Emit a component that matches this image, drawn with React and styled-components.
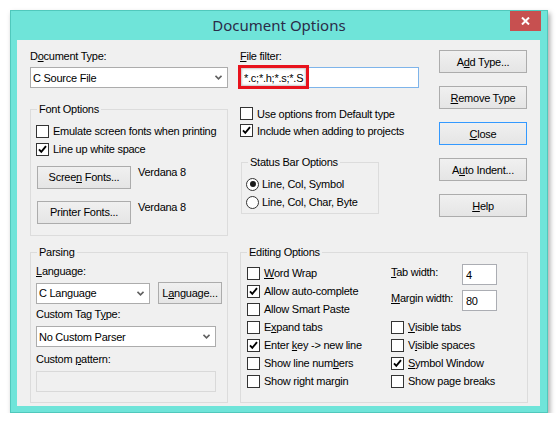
import React from "react";
import styled, { createGlobalStyle } from "styled-components";

const Global = createGlobalStyle`
  html, body { margin: 0; padding: 0; background: #fff; }
  body {
    font-family: "Liberation Sans", Arial, sans-serif;
    font-size: 11px;
    letter-spacing: -0.25px;
    color: #000;
  }
`;

const Window = styled.div`
  margin: 10px 0 0 10px;
  width: 538px;
  height: 403px;
  box-sizing: border-box;
  background: #6fe4d9;
  border: 1px solid #50c8bc;
  box-shadow: 2px 3px 5px rgba(0, 0, 0, 0.35);
  display: flex;
  flex-direction: column;
`;

const TitleBar = styled.div`
  height: 29px;
  flex: none;
  display: grid;
  grid-template-columns: 1fr auto 1fr;
  align-items: start;
`;

const Title = styled.div`
  grid-column: 2;
  font-family: "Noto Sans", "Open Sans", sans-serif;
  font-size: 15px;
  letter-spacing: 0;
  line-height: 29px;
  color: #2b2c48;
`;

const CloseX = styled.div`
  grid-column: 3;
  justify-self: end;
  margin-right: 6px;
  width: 31px;
  height: 20px;
  background: #c75050;
  display: flex;
  align-items: center;
  justify-content: center;
`;

const Client = styled.div`
  flex: 1;
  margin: 0 7px 6px 6px;
  background: #f0f0f0;
  padding: 10px 13px 0 13px;
  box-sizing: border-box;
  display: flex;
  flex-direction: column;
`;

const TopRow = styled.div`
  display: grid;
  grid-template-columns: 198px 179px 88px;
  column-gap: 12px;
  align-items: start;
  & > :nth-child(3) { margin-left: 8px; }
`;

const BottomRow = styled.div`
  display: grid;
  grid-template-columns: 198px 288px;
  column-gap: 12px;
  margin-top: 10px;
  align-items: start;
`;

const Col = styled.div`
  display: flex;
  flex-direction: column;
  align-items: flex-start;
`;

const Label = styled.div`
  line-height: 13px;
  height: 13px;
  white-space: nowrap;
  margin-top: ${(p) => p.$mt || 0}px;
`;

const Acc = styled.span`
  text-decoration: underline;
  text-underline-offset: 1px;
`;

const Combo = styled.div`
  box-sizing: border-box;
  width: ${(p) => p.$w}px;
  height: 21px;
  margin-top: ${(p) => p.$mt || 0}px;
  border: 1px solid #acacac;
  background: #fff;
  padding: 0 5px 0 2px;
  display: flex;
  align-items: center;
  justify-content: space-between;
  white-space: nowrap;
`;

const TextBox = styled.input`
  box-sizing: border-box;
  width: ${(p) => p.$w}px;
  height: 21px;
  margin: ${(p) => p.$mt || 0}px 0 0 0;
  border: 1px solid ${(p) => (p.$focus ? "#7eb4ea" : p.disabled ? "#d9d9d9" : "#abadb3")};
  background: ${(p) => (p.disabled ? "#f0f0f0" : "#fff")};
  padding: 0 3px;
  font: inherit;
  letter-spacing: inherit;
  color: #000;
  outline: none;
`;

const FilterWrap = styled.div`
  position: relative;
  margin-top: 4px;
`;

const Highlight = styled.div`
  position: absolute;
  left: -2px;
  top: -2px;
  width: 71px;
  height: 24px;
  box-sizing: border-box;
  border: 3px solid #e8121c;
  box-shadow: inset 0 0 2px 1px rgba(0, 0, 0, 0.22);
  pointer-events: none;
`;

const Group = styled.fieldset`
  margin: ${(p) => p.$m || "0"};
  padding: 0;
  border: 1px solid #dcdcdc;
  min-width: 0;
  box-sizing: border-box;
  width: ${(p) => p.$w}px;
`;

const Legend = styled.legend`
  margin-left: 6px;
  padding: 0 2px;
  line-height: 13px;
  height: 13px;
`;

const GroupBody = styled.div`
  padding: ${(p) => p.$pad};
  display: flex;
  flex-direction: column;
  align-items: flex-start;
`;

const Item = styled.div`
  display: flex;
  align-items: center;
  gap: ${(p) => (p.$radio ? 3 : 4)}px;
  height: ${(p) => p.$h || 18}px;
  white-space: nowrap;
  margin-top: ${(p) => p.$mt || 0}px;
`;

const Box = styled.span`
  box-sizing: border-box;
  width: 13px;
  height: 13px;
  flex: none;
  border: 1px solid #333;
  background: #fff;
  display: flex;
  align-items: center;
  justify-content: center;
`;

const Circle = styled(Box)`
  border-radius: 50%;
`;

const Dot = styled.span`
  width: 6px;
  height: 6px;
  border-radius: 50%;
  background: #1a1a1a;
`;

const Button = styled.button`
  box-sizing: border-box;
  width: ${(p) => p.$w}px;
  height: ${(p) => p.$h || 23}px;
  margin: 0;
  padding: 0;
  border: 1px solid ${(p) => (p.$default ? "#3399ff" : "#acacac")};
  background: linear-gradient(#f0f0f0, #e5e5e5);
  font: inherit;
  letter-spacing: inherit;
  color: #000;
  white-space: nowrap;
`;

const ButtonStack = styled.div`
  display: flex;
  flex-direction: column;
  gap: 13px;
`;

const FontRow = styled.div`
  display: flex;
  align-items: flex-start;
  gap: 7px;
  margin: ${(p) => p.$mt}px 0 0 1px;
  line-height: 13px;
`;

const LangRow = styled.div`
  display: flex;
  align-items: center;
  gap: 8px;
  margin-top: 4px;
`;

const EditGrid = styled.div`
  display: grid;
  grid-template-columns: 144px auto;
  padding: 5px 6px 12px 6px;
`;

const FieldRow = styled.div`
  display: flex;
  align-items: flex-start;
  margin-top: ${(p) => p.$mt || 0}px;
`;

const FieldLabel = styled.div`
  width: 71px;
  padding-top: 2px;
  line-height: 13px;
  white-space: nowrap;
`;

const Chevron = () => (
  <svg width="7" height="5" viewBox="0 0 7 5">
    <polyline points="0.5,0.8 3.5,3.8 6.5,0.8" fill="none" stroke="#606060" strokeWidth="1.6" />
  </svg>
);

const CheckMark = () => (
  <svg width="9" height="9" viewBox="0 0 9 9">
    <path d="M1 4.3 L3.3 6.8 L8 1.2" fill="none" stroke="#000" strokeWidth="1.9" />
  </svg>
);

const Check = ({ checked, children, h, mt }) => (
  <Item $h={h} $mt={mt}>
    <Box>{checked && <CheckMark />}</Box>
    <span>{children}</span>
  </Item>
);

const Radio = ({ checked, children }) => (
  <Item $radio>
    <Circle>{checked && <Dot />}</Circle>
    <span>{children}</span>
  </Item>
);

export default function App() {
  return (
    <>
      <Global />
      <Window>
        <TitleBar>
          <Title>Document Options</Title>
          <CloseX>
            <svg width="9" height="8" viewBox="0 0 9 8">
              <path d="M1 0.5 L8 7.5 M8 0.5 L1 7.5" stroke="#fff" strokeWidth="2" />
            </svg>
          </CloseX>
        </TitleBar>
        <Client>
          <TopRow>
            <Col>
              <Label>
                D<Acc>o</Acc>cument Type:
              </Label>
              <Combo $w={198} $mt={4}>
                <span>C Source File</span>
                <Chevron />
              </Combo>
              <Group $w={198} $m="15px 0 0 0">
                <Legend>Font Options</Legend>
                <GroupBody $pad="6px 5px 11px 5px">
                  <Check>Emulate screen fonts when printing</Check>
                  <Check checked>Line up white space</Check>
                  <FontRow $mt={8}>
                    <Button $w={94}>
                      Scree<Acc>n</Acc> Fonts...
                    </Button>
                    <span>Verdana 8</span>
                  </FontRow>
                  <FontRow $mt={12}>
                    <Button $w={94}>Printer Fonts...</Button>
                    <span>Verdana 8</span>
                  </FontRow>
                </GroupBody>
              </Group>
            </Col>
            <Col>
              <Label>
                <Acc>F</Acc>ile filter:
              </Label>
              <FilterWrap>
                <TextBox $w={179} $focus readOnly value="*.c;*.h;*.s;*.S" />
                <Highlight />
              </FilterWrap>
              <Check h={17} mt={17}>Use options from Default type</Check>
              <Check h={17} checked>Include when adding to projects</Check>
              <Group $w={138} $m="17px 0 0 1px">
                <Legend>Status Bar Options</Legend>
                <GroupBody $pad="6px 4px 2px 4px">
                  <Radio checked>Line, Col, Symbol</Radio>
                  <Radio>Line, Col, Char, Byte</Radio>
                </GroupBody>
              </Group>
            </Col>
            <ButtonStack>
              <Button $w={88}>
                A<Acc>d</Acc>d Type...
              </Button>
              <Button $w={88}>
                <Acc>R</Acc>emove Type
              </Button>
              <Button $w={88} $default>
                <Acc>C</Acc>lose
              </Button>
              <Button $w={88}>
                A<Acc>u</Acc>to Indent...
              </Button>
              <Button $w={88}>
                <Acc>H</Acc>elp
              </Button>
            </ButtonStack>
          </TopRow>
          <BottomRow>
            <Group $w={198}>
              <Legend>Parsing</Legend>
              <GroupBody $pad="6px 5px 10px 5px">
                <Label>
                  <Acc>L</Acc>anguage:
                </Label>
                <LangRow>
                  <Combo $w={114}>
                    <span>C Language</span>
                    <Chevron />
                  </Combo>
                  <Button $w={64} $h={22}>
                    L<Acc>a</Acc>nguage...
                  </Button>
                </LangRow>
                <Label $mt={4}>
                  Custom Tag T<Acc>y</Acc>pe:
                </Label>
                <Combo $w={180} $mt={5}>
                  <span>No Custom Parser</span>
                  <Chevron />
                </Combo>
                <Label $mt={6}>
                  Custom <Acc>p</Acc>attern:
                </Label>
                <TextBox $w={180} $mt={5} disabled value="" readOnly />
              </GroupBody>
            </Group>
            <Group $w={288}>
              <Legend>Editing Options</Legend>
              <EditGrid>
                <Col>
                  <Check>
                    <Acc>W</Acc>ord Wrap
                  </Check>
                  <Check checked>Allow auto-complete</Check>
                  <Check>Allow Smart Paste</Check>
                  <Check>
                    E<Acc>x</Acc>pand tabs
                  </Check>
                  <Check checked>
                    Enter <Acc>k</Acc>ey -&gt; new line
                  </Check>
                  <Check>
                    Show line num<Acc>b</Acc>ers
                  </Check>
                  <Check>Show right margin</Check>
                </Col>
                <Col>
                  <FieldRow>
                    <FieldLabel>
                      <Acc>T</Acc>ab width:
                    </FieldLabel>
                    <TextBox $w={35} readOnly value="4" />
                  </FieldRow>
                  <FieldRow $mt={5}>
                    <FieldLabel>
                      <Acc>M</Acc>argin width:
                    </FieldLabel>
                    <TextBox $w={35} readOnly value="80" />
                  </FieldRow>
                  <Check mt={7}>
                    <Acc>V</Acc>isible tabs
                  </Check>
                  <Check>
                    V<Acc>i</Acc>sible spaces
                  </Check>
                  <Check checked>
                    <Acc>S</Acc>ymbol Window
                  </Check>
                  <Check>Show page breaks</Check>
                </Col>
              </EditGrid>
            </Group>
          </BottomRow>
        </Client>
      </Window>
    </>
  );
}
